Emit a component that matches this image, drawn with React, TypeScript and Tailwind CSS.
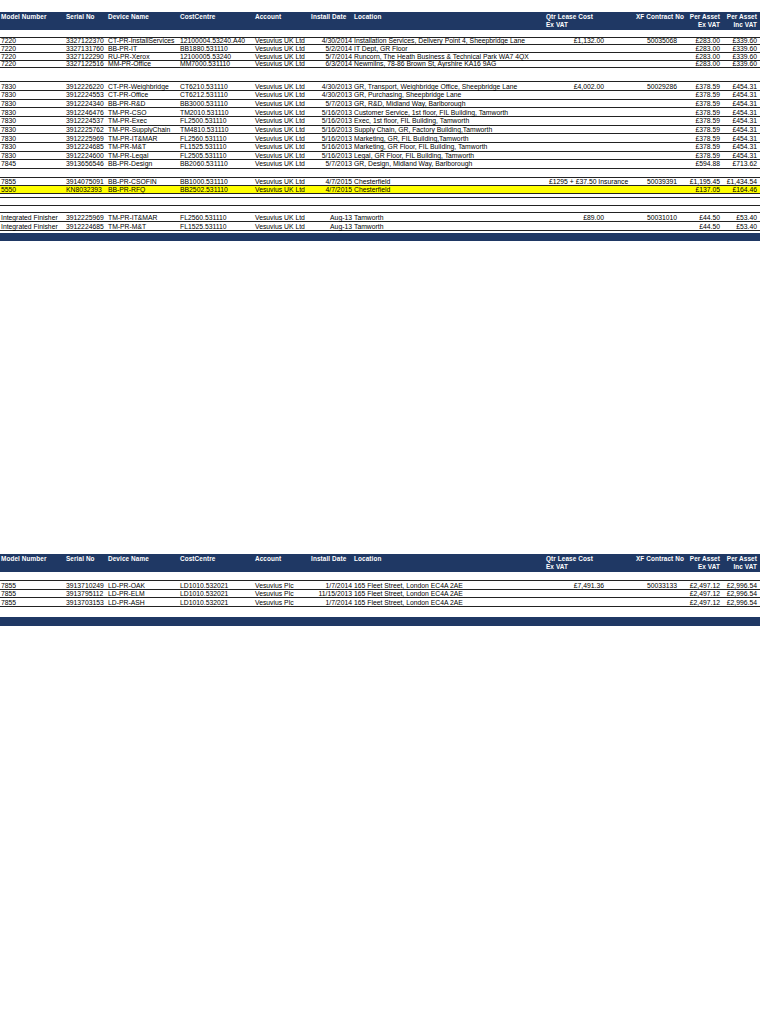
import React from "react";

type Col = { w: string; head: string; data: string };

// column geometry (px) taken from the sheet
const cols: Col[] = [
  { w: "w-[64px]", head: "pl-[1px] text-left", data: "pl-[1px] text-left" },
  { w: "w-[43px]", head: "pl-[2px] text-left", data: "pl-[2px] text-left" },
  { w: "w-[73px]", head: "pl-[1px] text-left", data: "pl-[1px] text-left" },
  { w: "w-[75px]", head: "pl-[0px] text-left", data: "pl-[0px] text-left" },
  { w: "w-[56px]", head: "pl-[0px] text-left", data: "pl-[0px] text-left" },
  { w: "w-[43px]", head: "pl-[0px] text-left", data: "pr-[2px] text-right" },
  { w: "w-[192px]", head: "pl-[0px] text-left", data: "pl-[0px] text-left" },
  { w: "w-[90px]", head: "pl-[0px] text-left", data: "pr-[32px] text-right" },
  { w: "w-[52px]", head: "pl-[0px] text-left", data: "text-center" },
  { w: "w-[34px]", head: "pr-[2px] text-right", data: "pr-[2px] text-right" },
  { w: "w-[38px]", head: "pr-[3px] text-right", data: "pr-[3px] text-right" },
];

const heads = [
  ["Model Number"],
  ["Serial No"],
  ["Device Name"],
  ["CostCentre"],
  ["Account"],
  ["Install Date"],
  ["Location"],
  ["Qtr Lease Cost", "Ex VAT"],
  ["XF Contract No"],
  ["Per Asset", "Ex VAT"],
  ["Per Asset", "Inc VAT"],
];

const uk = "Vesuvius UK Ltd";

const group1 = [
  ["7220", "3327122370", "CT-PR-InstallServices", "12100004.53240.A40", uk, "4/30/2014", "Installation Services, Delivery Point 4, Sheepbridge Lane", "£1,132.00", "50035068", "£283.00", "£339.60"],
  ["7220", "3327131760", "BB-PR-IT", "BB1880.531110", uk, "5/2/2014", "IT Dept, GR Floor", "", "", "£283.00", "£339.60"],
  ["7220", "3327122290", "RU-PR-Xerox", "12100005.53240", uk, "5/7/2014", "Runcorn, The Heath Business & Technical Park WA7 4QX", "", "", "£283.00", "£339.60"],
  ["7220", "3327122516", "MM-PR-Office", "MM7000.531110", uk, "6/3/2014", "Newmilns, 78-86 Brown St, Ayrshire  KA16 9AG", "", "", "£283.00", "£339.60"],
];

const group2 = [
  ["7830", "3912226220", "CT-PR-Weighbridge", "CT6210.531110", uk, "4/30/2013", "GR, Transport, Weighbridge Office, Sheepbridge Lane", "£4,002.00", "50029286", "£378.59", "£454.31"],
  ["7830", "3912224553", "CT-PR-Office", "CT6212.531110", uk, "4/30/2013", "GR, Purchasing, Sheepbridge Lane", "", "", "£378.59", "£454.31"],
  ["7830", "3912224340", "BB-PR-R&D", "BB3000.531110", uk, "5/7/2013", "GR, R&D, Midland Way, Barlborough", "", "", "£378.59", "£454.31"],
  ["7830", "3912246476", "TM-PR-CSO", "TM2010.531110", uk, "5/16/2013", "Customer Service, 1st floor, FIL Building, Tamworth", "", "", "£378.59", "£454.31"],
  ["7830", "3912224537", "TM-PR-Exec", "FL2500.531110", uk, "5/16/2013", "Exec, 1st floor, FIL Building, Tamworth", "", "", "£378.59", "£454.31"],
  ["7830", "3912225762", "TM-PR-SupplyChain", "TM4810.531110", uk, "5/16/2013", "Supply Chain, GR, Factory Building,Tamworth", "", "", "£378.59", "£454.31"],
  ["7830", "3912225969", "TM-PR-IT&MAR", "FL2560.531110", uk, "5/16/2013", "Marketing, GR, FIL Building,Tamworth", "", "", "£378.59", "£454.31"],
  ["7830", "3912224685", "TM-PR-M&T", "FL1525.531110", uk, "5/16/2013", "Marketing, GR Floor, FIL Building, Tamworth", "", "", "£378.59", "£454.31"],
  ["7830", "3912224600", "TM-PR-Legal", "FL2505.531110", uk, "5/16/2013", "Legal, GR Floor, FIL Building, Tamworth", "", "", "£378.59", "£454.31"],
  ["7845", "3913656546", "BB-PR-Design", "BB2060.531110", uk, "5/7/2013", "GR, Design, Midland Way, Barlborough", "", "", "£594.88", "£713.62"],
];

const group3 = [
  ["7855", "3914075091", "BB-PR-CSOFIN", "BB1000.531110", uk, "4/7/2015", "Chesterfield", "£1295 + £37.50 Insurance", "50039391", "£1,195.45", "£1,434.54"],
  ["5550", "KN8032393", "BB-PR-RFQ", "BB2502.531110", uk, "4/7/2015", "Chesterfield", "", "", "£137.05", "£164.46"],
];

const group4 = [
  ["Integrated Finisher", "3912225969", "TM-PR-IT&MAR", "FL2560.531110", uk, "Aug-13", "Tamworth", "£89.00", "50031010", "£44.50", "£53.40"],
  ["Integrated Finisher", "3912224685", "TM-PR-M&T", "FL1525.531110", uk, "Aug-13", "Tamworth", "", "", "£44.50", "£53.40"],
];

const plc = "Vesuvius Plc";
const fleet = "165 Fleet Street, London EC4A 2AE";
const group5 = [
  ["7855", "3913710249", "LD-PR-OAK", "LD1010.532021", plc, "1/7/2014", fleet, "£7,491.36", "50033133", "£2,497.12", "£2,996.54"],
  ["7855", "3913795112", "LD-PR-ELM", "LD1010.532021", plc, "11/15/2013", fleet, "", "", "£2,497.12", "£2,996.54"],
  ["7855", "3913703153", "LD-PR-ASH", "LD1010.532021", plc, "1/7/2014", fleet, "", "", "£2,497.12", "£2,996.54"],
];

function Header() {
  return (
    <div className="flex h-[18px] w-[760px] bg-[#1f3864] pt-[1px] text-[6.4px] text-white font-bold tracking-[0.1px]">
      {heads.map((h, i) => (
        <div key={i} className={`${cols[i].w} ${cols[i].head} shrink-0 whitespace-nowrap leading-[8px]`}>
          {h.map((l) => (
            <div key={l}>{l}</div>
          ))}
        </div>
      ))}
    </div>
  );
}

function Row({ cells, h, yellow }: { cells: string[]; h: string; yellow?: boolean }) {
  return (
    <div className={`flex ${h} w-[760px] items-center border-b border-[#222] ${yellow ? "bg-[#ffff00]" : ""}`}>
      {cells.map((c, i) => {
        // text values in the lease column sit to the left
        const align = i === 7 && c.includes("Insurance") ? "pl-[3px] text-left" : cols[i].data;
        return (
          <div key={i} className={`${cols[i].w} ${align} shrink-0 whitespace-nowrap leading-[7px]`}>
            {c}
          </div>
        );
      })}
    </div>
  );
}

function Group({ rows, h, mt, yellowLast }: { rows: string[][]; h: string; mt: string; yellowLast?: boolean }) {
  return (
    <div className={`${mt} w-[760px] border-t border-[#222]`}>
      {rows.map((r, i) => (
        <Row key={i} cells={r} h={h} yellow={yellowLast && i === rows.length - 1} />
      ))}
    </div>
  );
}

export default function App() {
  return (
    <div className="min-h-[1024px] w-[768px] bg-white pt-[12px] font-['Liberation_Sans',Arial,sans-serif] text-[6.8px] text-black">
      <Header />
      <Group rows={group1} h="h-[7.7px]" mt="mt-[6.5px]" />
      <Group rows={group2} h="h-[8.67px]" mt="mt-[13px]" />
      <Group rows={group3} h="h-[8px]" mt="mt-[8px]" yellowLast />
      <div className="mt-[3.5px] h-[9px] w-[760px] border-y border-[#222]" />
      <Group rows={group4} h="h-[9px]" mt="mt-[6px]" />
      <div className="mt-[2px] h-[8px] w-[760px] bg-[#1f3864]" />

      <div className="mt-[313px]">
        <Header />
      </div>
      <Group rows={group5} h="h-[8.5px]" mt="mt-[8px]" />
      <div className="mt-[10px] h-[9px] w-[760px] bg-[#1f3864]" />
    </div>
  );
}
